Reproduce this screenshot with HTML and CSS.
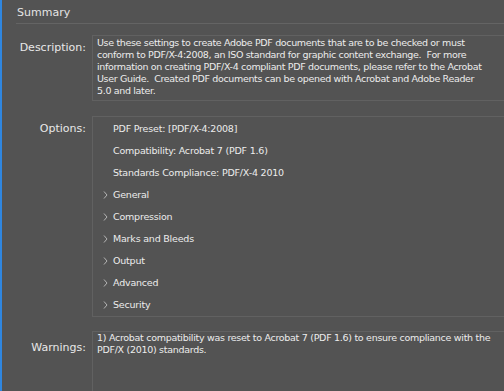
FILE: index.html
```html
<!DOCTYPE html>
<html>
<head>
<meta charset="utf-8">
<link rel="stylesheet" href="styles.css">
</head>
<body>
<div class="panel">
  <div class="header"><span class="title">Summary</span></div>
  <div class="row row-desc">
    <div class="label label-desc">Description:</div>
    <div class="box desc">Use these settings to create Adobe PDF documents that are to be checked or must<br>conform to PDF/X-4:2008, an ISO standard for graphic content exchange.&nbsp; For more<br>information on creating PDF/X-4 compliant PDF documents, please refer to the Acrobat<br>User Guide.&nbsp; Created PDF documents can be opened with Acrobat and Adobe Reader<br>5.0 and later.</div>
  </div>
  <div class="row row-opts">
    <div class="label label-opts">Options:</div>
    <div class="box opts">
      <div class="item">PDF Preset: [PDF/X-4:2008]</div>
      <div class="item">Compatibility: Acrobat 7 (PDF 1.6)</div>
      <div class="item">Standards Compliance: PDF/X-4 2010</div>
      <div class="item group"><svg class="chev" width="5" height="8" viewBox="0 0 5 8"><path d="M1 0.5 L4 4 L1 7.5" fill="none" stroke="#b4b4b4" stroke-width="1"/></svg>General</div>
      <div class="item group"><svg class="chev" width="5" height="8" viewBox="0 0 5 8"><path d="M1 0.5 L4 4 L1 7.5" fill="none" stroke="#b4b4b4" stroke-width="1"/></svg>Compression</div>
      <div class="item group"><svg class="chev" width="5" height="8" viewBox="0 0 5 8"><path d="M1 0.5 L4 4 L1 7.5" fill="none" stroke="#b4b4b4" stroke-width="1"/></svg>Marks and Bleeds</div>
      <div class="item group"><svg class="chev" width="5" height="8" viewBox="0 0 5 8"><path d="M1 0.5 L4 4 L1 7.5" fill="none" stroke="#b4b4b4" stroke-width="1"/></svg>Output</div>
      <div class="item group"><svg class="chev" width="5" height="8" viewBox="0 0 5 8"><path d="M1 0.5 L4 4 L1 7.5" fill="none" stroke="#b4b4b4" stroke-width="1"/></svg>Advanced</div>
      <div class="item group"><svg class="chev" width="5" height="8" viewBox="0 0 5 8"><path d="M1 0.5 L4 4 L1 7.5" fill="none" stroke="#b4b4b4" stroke-width="1"/></svg>Security</div>
    </div>
  </div>
  <div class="row row-warn">
    <div class="label label-warn">Warnings:</div>
    <div class="box warn">1) Acrobat compatibility was reset to Acrobat 7 (PDF 1.6) to ensure compliance with the<br>PDF/X (2010) standards.</div>
  </div>
</div>
</body>
</html>
```
FILE: styles.css
```css
html, body {
  margin: 0;
  padding: 0;
  background: #535353;
  overflow: hidden;
  height: 100%;
}
.panel {
  box-sizing: border-box;
  height: 391px;
  width: 504px;
  border-left: 2px solid #2f86df;
  font-family: "DejaVu Sans", sans-serif;
  color: #e4e4e4;
  overflow: hidden;
}
.header {
  margin-left: 14px;
  height: 24px;
  border-bottom: 1px solid #646464;
  box-sizing: border-box;
  padding-top: 5px;
}
.title {
  font-size: 11px;
  line-height: 15px;
  margin-left: 1px;
  display: block;
}
.row {
  display: grid;
  grid-template-columns: 84px 470px;
  column-gap: 6px;
  align-items: start;
}
.label {
  text-align: right;
  font-size: 11px;
  line-height: 15px;
  color: #e8e8e8;
}
.box {
  border: 1px solid #616161;
  box-sizing: border-box;
  font-size: 9.5px;
  line-height: 12px;
  color: #ececec;
  white-space: nowrap;
}
.row-desc { margin-top: 11px; }
.label-desc { margin-top: 5px; }
.desc {
  height: 66px;
  padding: 1px 0 0 4px;
  letter-spacing: -0.34px;
}
.row-opts { margin-top: 15px; }
.label-opts { margin-top: 5px; }
.opts {
  padding: 1px 0 0 20px;
  letter-spacing: -0.2px;
}
.item {
  height: 22px;
  display: flex;
  align-items: center;
  position: relative;
}
.chev {
  position: absolute;
  left: -10px;
  top: 7px;
}
.row-warn { margin-top: 14px; }
.label-warn { margin-top: 9px; }
.warn {
  height: 80px;
  padding: 0 0 0 4px;
  letter-spacing: -0.29px;
}
```
